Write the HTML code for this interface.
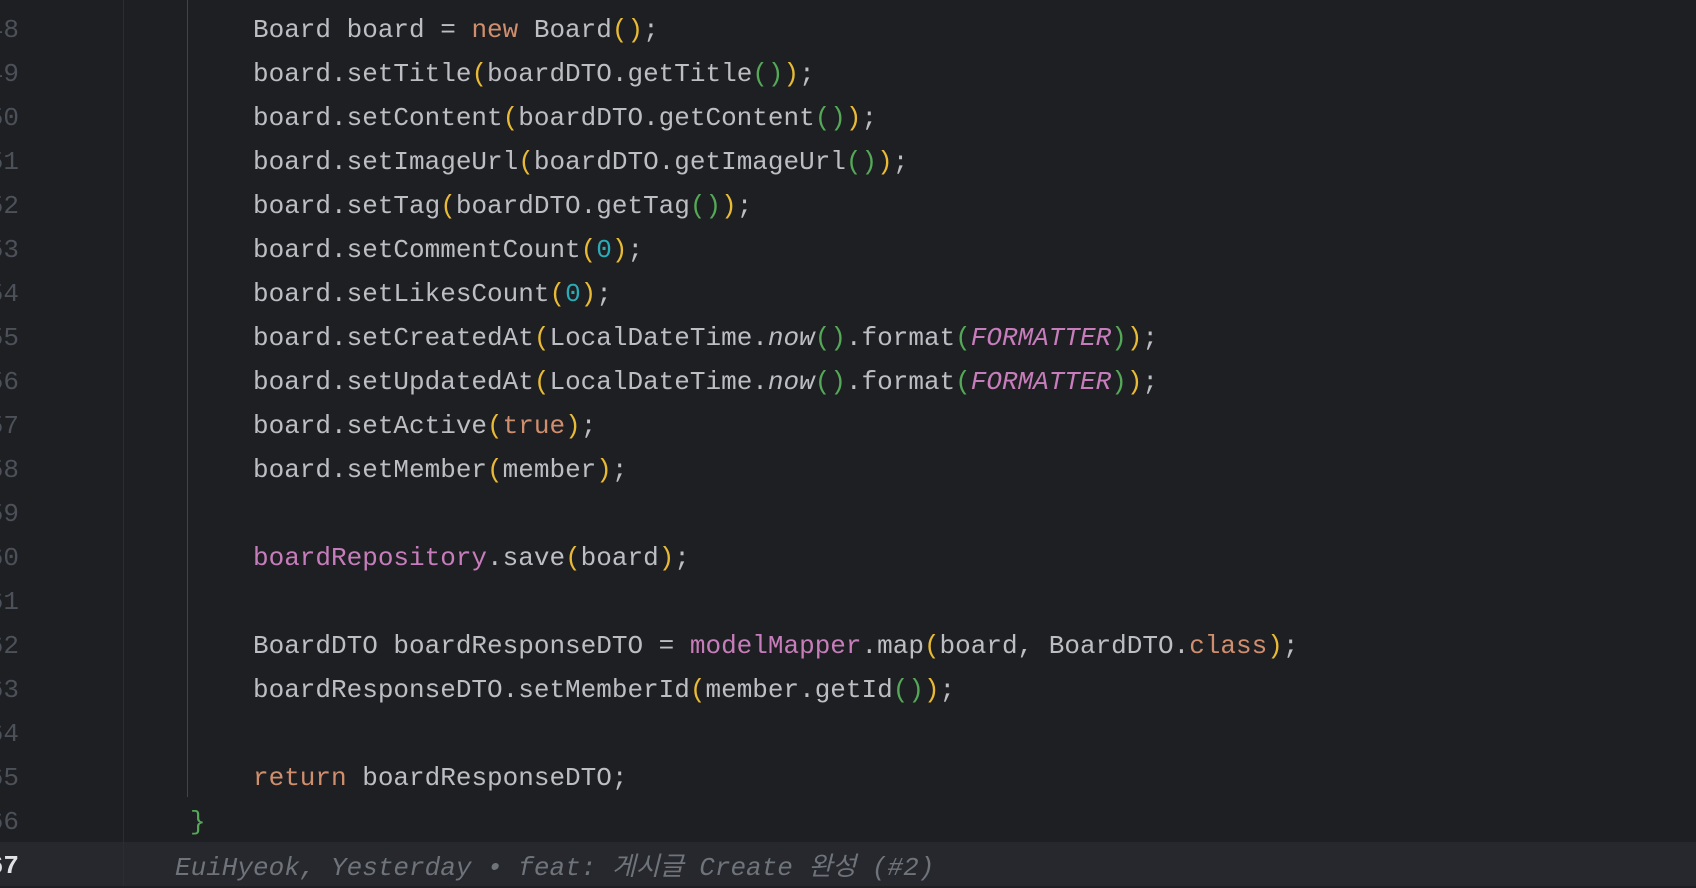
<!DOCTYPE html>
<html><head><meta charset="utf-8"><style>
body{margin:0;width:1696px;height:886px;background:#1e1f22;overflow:hidden;font-family:"Liberation Mono","Noto Sans CJK KR",monospace;font-size:26px;color:#bcbec4;position:relative}
.ln{position:absolute;left:-60px;width:79px;text-align:right;color:#4b5059}
.c{position:absolute;left:253px;white-space:pre}
.k{color:#cf8e6d}.p{color:#c77dbb}.n{color:#2aacb8}.y{color:#e8ba36}.g{color:#54a857}.i{font-style:italic}
.gut{position:absolute;left:123px;top:0;width:1px;height:886px;background:#2b2d30}
.guide{position:absolute;left:187px;top:0;width:1px;height:797px;background:#3b4a3b}
.cur{position:absolute;left:0;top:842px;width:1696px;height:44px;background:#26282e}
</style></head><body>
<div class="cur"></div><div class="gut"></div><div class="guide"></div>
<div id="w"></div>
<script>
const L=[
'Board board = <span class=k>new</span> Board<span class=y>()</span>;',
'board.setTitle<span class=y>(</span>boardDTO.getTitle<span class=g>()</span><span class=y>)</span>;',
'board.setContent<span class=y>(</span>boardDTO.getContent<span class=g>()</span><span class=y>)</span>;',
'board.setImageUrl<span class=y>(</span>boardDTO.getImageUrl<span class=g>()</span><span class=y>)</span>;',
'board.setTag<span class=y>(</span>boardDTO.getTag<span class=g>()</span><span class=y>)</span>;',
'board.setCommentCount<span class=y>(</span><span class=n>0</span><span class=y>)</span>;',
'board.setLikesCount<span class=y>(</span><span class=n>0</span><span class=y>)</span>;',
'board.setCreatedAt<span class=y>(</span>LocalDateTime.<span class=i>now</span><span class=g>()</span>.format<span class=g>(</span><span class="p i">FORMATTER</span><span class=g>)</span><span class=y>)</span>;',
'board.setUpdatedAt<span class=y>(</span>LocalDateTime.<span class=i>now</span><span class=g>()</span>.format<span class=g>(</span><span class="p i">FORMATTER</span><span class=g>)</span><span class=y>)</span>;',
'board.setActive<span class=y>(</span><span class=k>true</span><span class=y>)</span>;',
'board.setMember<span class=y>(</span>member<span class=y>)</span>;',
'',
'<span class=p>boardRepository</span>.save<span class=y>(</span>board<span class=y>)</span>;',
'',
'BoardDTO boardResponseDTO = <span class=p>modelMapper</span>.map<span class=y>(</span>board, BoardDTO.<span class=k>class</span><span class=y>)</span>;',
'boardResponseDTO.setMemberId<span class=y>(</span>member.getId<span class=g>()</span><span class=y>)</span>;',
'',
'<span class=k>return</span> boardResponseDTO;',
'<span class=g style="margin-left:-63px">}</span>',
'<span class=i style="color:#6f737a;margin-left:-78px;position:relative;top:-5px">EuiHyeok, Yesterday • feat: 게시글 Create 완성 (#2)</span>'
];
let h='';
L.forEach((s,i)=>{const t=i*44+15;h+=`<div class=ln style="top:${t}px;${i==19?'color:#dfe1e5;font-weight:bold':''}">${148+i}</div><div class=c style="top:${t}px">${s}</div>`});
document.getElementById('w').innerHTML=h;
</script>
</body></html>
